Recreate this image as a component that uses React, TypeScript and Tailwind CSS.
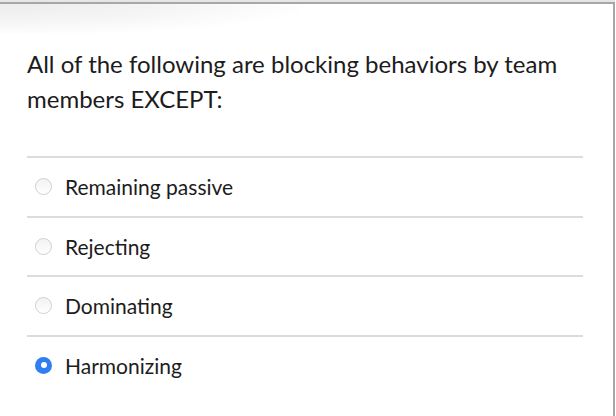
const options = [
  { label: 'Remaining passive', checked: false },
  { label: 'Rejecting', checked: false },
  { label: 'Dominating', checked: false },
  { label: 'Harmonizing', checked: true },
];

function Radio({ checked }: { checked: boolean }) {
  if (checked) {
    return (
      <span className="flex h-[17px] w-[17px] shrink-0 items-center justify-center rounded-full bg-[#2f7ff2]">
        <span className="h-[6px] w-[6px] rounded-full bg-white" />
      </span>
    );
  }
  return (
    <span className="h-[17px] w-[17px] shrink-0 rounded-full border border-[#cfcfcf] bg-gradient-to-b from-[#f2f2f2] to-white" />
  );
}

export default function App() {
  return (
    <div className="relative h-[416px] w-[616px] overflow-hidden bg-white font-['Lato','Noto_Sans',sans-serif] text-[#1c1c1c]">
      <div className="h-[2px] w-[615px] bg-[#e6e6e6]" />
      <div className="h-[414px] w-[615px] border-r-2 border-t-2 border-[#a7a7a7]">
        {/* top shadow */}
        <div className="pointer-events-none absolute left-0 top-[4px] h-[30px] w-[300px] bg-[radial-gradient(ellipse_at_top_left,#ececec_0%,#f5f5f5_40%,transparent_75%)]" />
        <div className="pl-[27px] pr-[30px] pt-[42px]">
          <p className="text-[24px] leading-[35px]">
            All of the following are blocking behaviors by team members EXCEPT:
          </p>
          <div className="mt-[40px]">
            {options.map((o) => (
              <div
                key={o.label}
                className="flex h-[59.5px] items-center gap-[13px] border-t-2 border-[#dcdcdc] pl-[8px]"
              >
                <Radio checked={o.checked} />
                <span className="text-[21px]">{o.label}</span>
              </div>
            ))}
          </div>
        </div>
      </div>
    </div>
  );
}
